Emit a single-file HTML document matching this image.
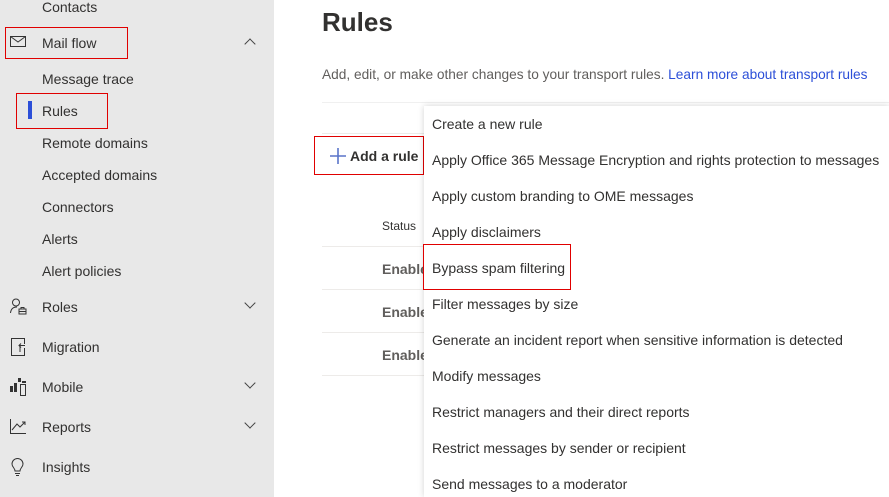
<!DOCTYPE html>
<html style="width:889px;height:497px;overflow:hidden"><head><style>
*{margin:0;padding:0;box-sizing:border-box}
body{width:889px;height:497px;overflow:hidden;background:#fff;font-family:"Liberation Sans",sans-serif;color:#323130;position:relative}
.side{position:absolute;left:0;top:0;width:274px;height:497px;background:#e8e8e8}
.t{position:absolute;font-size:14px;color:#323130;white-space:nowrap}
.red{position:absolute;border:1px solid #e00000}
.ic{position:absolute}
.chev{position:absolute;width:8px;height:8px;border-right:1.3px solid #444;border-bottom:1.3px solid #444}
.menu{position:absolute;left:424px;top:106px;width:465px;height:391px;background:#fff;box-shadow:0 0 6px rgba(0,0,0,.18);overflow:hidden}
.mi{position:absolute;left:8px;font-size:14px;color:#323130;white-space:nowrap}
.hr{position:absolute;left:322px;width:110px;height:1px;background:#edebe9}
</style></head><body>
<div class="side">
<div class="t" style="left:42px;top:-1px">Contacts</div>
<svg class="ic" style="left:10px;top:36px" width="16" height="11" viewBox="0 0 16 11"><rect x="0.5" y="0.5" width="15" height="10" fill="none" stroke="#333"/><path d="M0.5 0.5 L8 6 L15.5 0.5" fill="none" stroke="#333"/></svg>
<div class="t" style="left:42px;top:35px">Mail flow</div>
<div class="chev" style="left:246px;top:40px;transform:rotate(-135deg)"></div>
<div class="red" style="left:5px;top:27px;width:123px;height:32px"></div>
<div class="t" style="left:42px;top:71px">Message trace</div>
<div style="position:absolute;left:28px;top:101px;width:4px;height:18px;background:#2c4fd8"></div>
<div class="t" style="left:42px;top:103px">Rules</div>
<div class="red" style="left:16px;top:93px;width:92px;height:36px"></div>
<div class="t" style="left:42px;top:135px">Remote domains</div>
<div class="t" style="left:42px;top:167px">Accepted domains</div>
<div class="t" style="left:42px;top:199px">Connectors</div>
<div class="t" style="left:42px;top:231px">Alerts</div>
<div class="t" style="left:42px;top:263px">Alert policies</div>
<svg class="ic" style="left:10px;top:298px" width="17" height="17" viewBox="0 0 17 17" fill="none" stroke="#333"><circle cx="6" cy="4.5" r="3.5"/><path d="M0.5 15 C1 10 4 9 7 9"/><rect x="9" y="11" width="7" height="5"/><path d="M11 11 V9.5 H14 V11 M9 13.5 H16"/></svg>
<div class="t" style="left:42px;top:299px">Roles</div>
<div class="chev" style="left:246px;top:299px;transform:rotate(45deg)"></div>
<svg class="ic" style="left:11px;top:338px" width="16" height="18" viewBox="0 0 16 18" fill="none" stroke="#333"><path d="M13.5 6 V0.5 H0.5 V17.5 H13.5 V10"/><path d="M14 7.5 H8 M10 5.5 L8 7.5 L10 9.5 M9 8 V14"/></svg>
<div class="t" style="left:42px;top:339px">Migration</div>
<svg class="ic" style="left:10px;top:378px" width="17" height="18" viewBox="0 0 17 18"><rect x="0" y="8" width="3" height="6" fill="#333"/><rect x="4" y="5" width="3" height="9" fill="#333"/><rect x="8" y="0" width="3" height="4" fill="#333"/><rect x="12" y="3" width="4" height="2" fill="#333"/><rect x="10.5" y="6.5" width="5" height="11" fill="none" stroke="#333"/></svg>
<div class="t" style="left:42px;top:379px">Mobile</div>
<div class="chev" style="left:246px;top:379px;transform:rotate(45deg)"></div>
<svg class="ic" style="left:10px;top:419px" width="17" height="15" viewBox="0 0 17 15" fill="none" stroke="#333"><path d="M0.5 0 V14.5 H16"/><path d="M2 11 L7 5 L10 8 L15 3 M12 3 H15 V6"/></svg>
<div class="t" style="left:42px;top:419px">Reports</div>
<div class="chev" style="left:246px;top:419px;transform:rotate(45deg)"></div>
<svg class="ic" style="left:11px;top:458px" width="13" height="18" viewBox="0 0 13 18" fill="none" stroke="#333"><path d="M4 13 C4 10 1 9 1 6 A5.5 5.5 0 0 1 12 6 C12 9 9 10 9 13 Z"/><path d="M4 15.5 H9 M5 17.5 H8"/></svg>
<div class="t" style="left:42px;top:459px">Insights</div>
</div>

<div style="position:absolute;left:322px;top:7px;font-size:26px;font-weight:bold;color:#323130">Rules</div>
<div style="position:absolute;left:322px;top:67px;font-size:13.7px;color:#605e5c;white-space:nowrap">Add, edit, or make other changes to your transport rules. <span style="color:#2c4fd8">Learn more about transport rules</span></div>
<div style="position:absolute;left:322px;top:102px;width:567px;height:1px;background:#f0f0f0"></div>
<div class="hr" style="top:133px"></div>
<svg class="ic" style="left:330px;top:148px" width="16" height="16" viewBox="0 0 16 16" stroke="#5a74c9" stroke-width="1.6"><path d="M8 0 V16 M0 8 H16"/></svg>
<div style="position:absolute;left:350px;top:148px;font-size:14px;font-weight:bold;color:#323130">Add a rule</div>
<div class="red" style="left:314px;top:136px;width:110px;height:39px"></div>
<div style="position:absolute;left:382px;top:219px;font-size:12px;color:#323130">Status</div>
<div class="hr" style="top:246px"></div>
<div style="position:absolute;left:382px;top:261px;font-size:14px;font-weight:bold;color:#605e5c">Enable</div>
<div class="hr" style="top:289px"></div>
<div style="position:absolute;left:382px;top:304px;font-size:14px;font-weight:bold;color:#605e5c">Enable</div>
<div class="hr" style="top:332px"></div>
<div style="position:absolute;left:382px;top:347px;font-size:14px;font-weight:bold;color:#605e5c">Enable</div>
<div class="hr" style="top:375px"></div>

<div class="menu">
<div class="mi" style="top:10px">Create a new rule</div>
<div class="mi" style="top:46px">Apply Office 365 Message Encryption and rights protection to messages</div>
<div class="mi" style="top:82px">Apply custom branding to OME messages</div>
<div class="mi" style="top:118px">Apply disclaimers</div>
<div class="mi" style="top:154px">Bypass spam filtering</div>
<div class="mi" style="top:190px">Filter messages by size</div>
<div class="mi" style="top:226px">Generate an incident report when sensitive information is detected</div>
<div class="mi" style="top:262px">Modify messages</div>
<div class="mi" style="top:298px">Restrict managers and their direct reports</div>
<div class="mi" style="top:334px">Restrict messages by sender or recipient</div>
<div class="mi" style="top:370px">Send messages to a moderator</div>
</div>
<div class="red" style="left:423px;top:244px;width:148px;height:46px"></div>
</body></html>
